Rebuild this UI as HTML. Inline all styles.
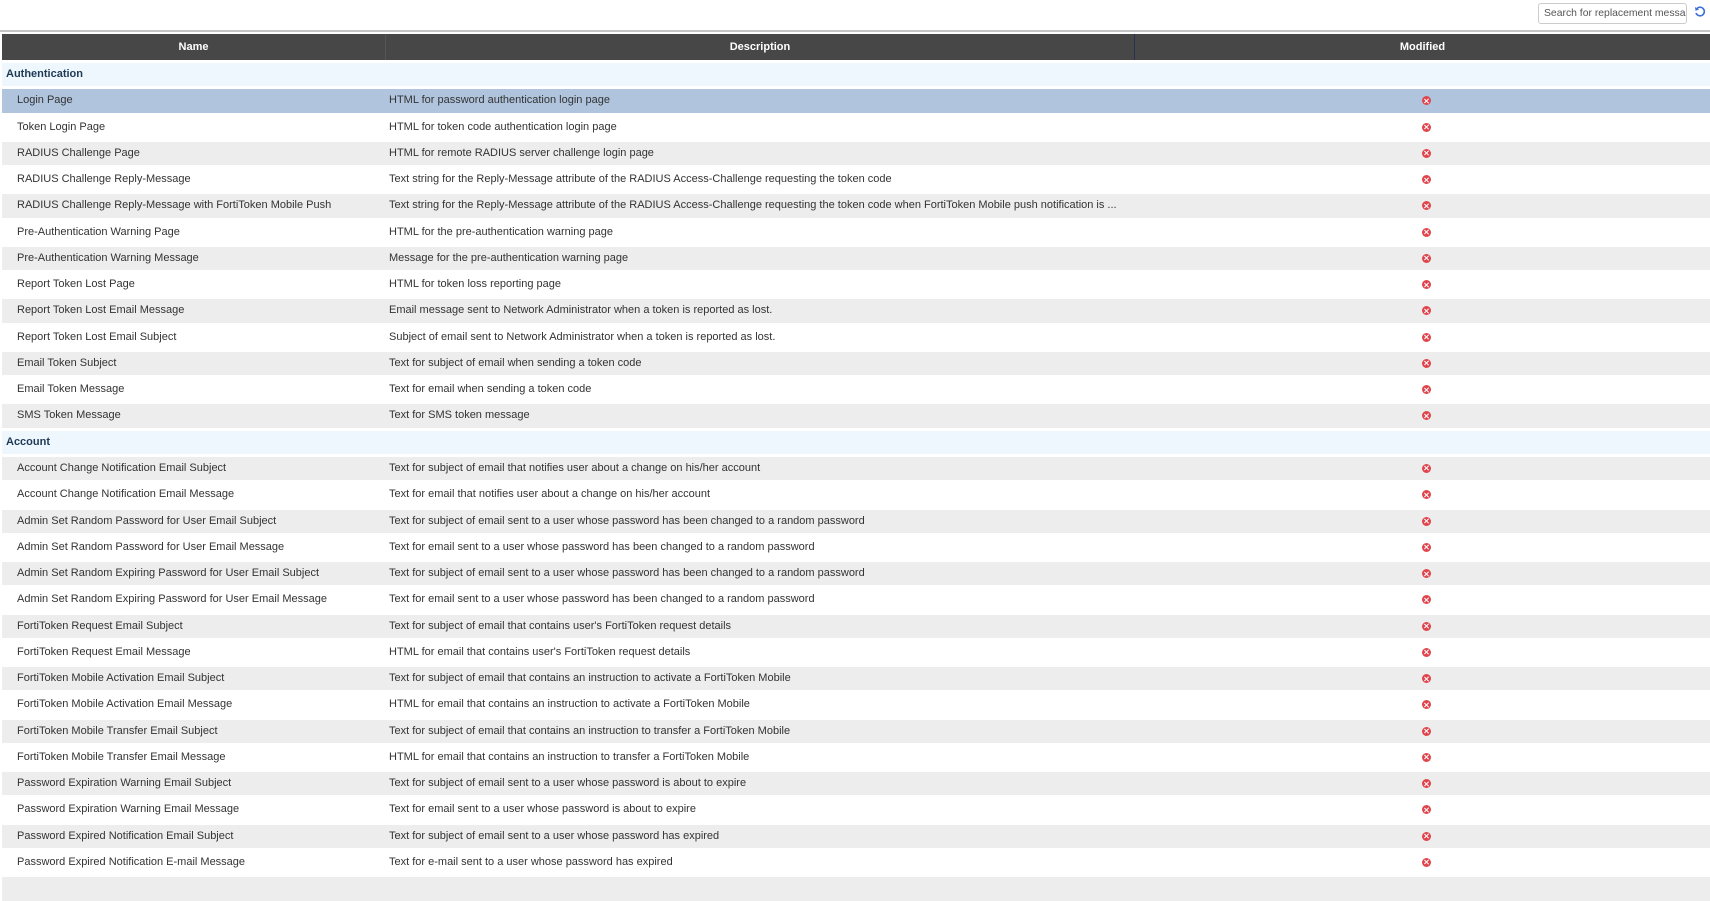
<!DOCTYPE html>
<html><head><meta charset="utf-8"><style>
*{box-sizing:border-box;margin:0;padding:0}
body{width:1710px;height:880px;overflow:hidden;background:#fff;font-family:"Liberation Sans",sans-serif;font-size:11px;color:#333;position:relative}
.top{position:absolute;left:0;top:0;width:1710px;height:32px;border-bottom:2px solid #c4c4c4}
.search{position:absolute;left:1538px;top:3px;width:149px;height:21px;border:1px solid #ccc;border-radius:3px;font-size:10.4px;color:#555;padding:4px 5px;white-space:nowrap;overflow:hidden}
.ref{position:absolute;left:1694px;top:6px}
.hdr{position:absolute;left:2px;top:34px;width:1708px;height:26px;background:#474747;color:#fff;font-weight:bold;font-size:11px}
.hdr div{position:absolute;top:0;height:26px;line-height:26px;text-align:center}
.rows{position:absolute;left:2px;top:60px;width:1708px}
.r{height:26.28px;border-top:3px solid #fff;position:relative}
.r.g{background:#ededed}
.r.s{background:#b0c4de}
.r.grp{background:#eef6fe;font-weight:bold;color:#1f3a55}
.r span{position:absolute;top:0;line-height:23px;white-space:nowrap}
.n{left:15px}.d{left:387px}
.grp span{left:4px}
.x{position:absolute;left:1420px;top:7px;width:9px;height:9px;border-radius:50%;background:#e0454d}
.x:before,.x:after{content:"";position:absolute;left:4px;top:1.5px;width:1.3px;height:6px;background:#fff;transform:rotate(45deg)}
.x:after{transform:rotate(-45deg)}
</style></head><body>
<div class="top"><div class="search">Search for replacement messag</div>
<svg class="ref" width="12" height="12" viewBox="0 0 12 12"><path d="M3 2.5 A4.3 4.3 0 1 1 2 7" fill="none" stroke="#3b6fd8" stroke-width="1.6"/><path d="M1 1 L1.5 4.8 L5 3.6 Z" fill="#3b6fd8"/></svg></div>
<div class="hdr"><div style="left:0;width:383px">Name</div><div style="left:383px;width:750px;border-left:1px solid #555;border-right:1px solid #2a3050">Description</div><div style="left:1133px;width:575px">Modified</div></div>
<div class="rows">
<div class="r grp"><span>Authentication</span></div>
<div class="r s"><span class="n">Login Page</span><span class="d">HTML for password authentication login page</span><i class="x"></i></div>
<div class="r"><span class="n">Token Login Page</span><span class="d">HTML for token code authentication login page</span><i class="x"></i></div>
<div class="r g"><span class="n">RADIUS Challenge Page</span><span class="d">HTML for remote RADIUS server challenge login page</span><i class="x"></i></div>
<div class="r"><span class="n">RADIUS Challenge Reply-Message</span><span class="d">Text string for the Reply-Message attribute of the RADIUS Access-Challenge requesting the token code</span><i class="x"></i></div>
<div class="r g"><span class="n">RADIUS Challenge Reply-Message with FortiToken Mobile Push</span><span class="d">Text string for the Reply-Message attribute of the RADIUS Access-Challenge requesting the token code when FortiToken Mobile push notification is ...</span><i class="x"></i></div>
<div class="r"><span class="n">Pre-Authentication Warning Page</span><span class="d">HTML for the pre-authentication warning page</span><i class="x"></i></div>
<div class="r g"><span class="n">Pre-Authentication Warning Message</span><span class="d">Message for the pre-authentication warning page</span><i class="x"></i></div>
<div class="r"><span class="n">Report Token Lost Page</span><span class="d">HTML for token loss reporting page</span><i class="x"></i></div>
<div class="r g"><span class="n">Report Token Lost Email Message</span><span class="d">Email message sent to Network Administrator when a token is reported as lost.</span><i class="x"></i></div>
<div class="r"><span class="n">Report Token Lost Email Subject</span><span class="d">Subject of email sent to Network Administrator when a token is reported as lost.</span><i class="x"></i></div>
<div class="r g"><span class="n">Email Token Subject</span><span class="d">Text for subject of email when sending a token code</span><i class="x"></i></div>
<div class="r"><span class="n">Email Token Message</span><span class="d">Text for email when sending a token code</span><i class="x"></i></div>
<div class="r g"><span class="n">SMS Token Message</span><span class="d">Text for SMS token message</span><i class="x"></i></div>
<div class="r grp"><span>Account</span></div>
<div class="r g"><span class="n">Account Change Notification Email Subject</span><span class="d">Text for subject of email that notifies user about a change on his/her account</span><i class="x"></i></div>
<div class="r"><span class="n">Account Change Notification Email Message</span><span class="d">Text for email that notifies user about a change on his/her account</span><i class="x"></i></div>
<div class="r g"><span class="n">Admin Set Random Password for User Email Subject</span><span class="d">Text for subject of email sent to a user whose password has been changed to a random password</span><i class="x"></i></div>
<div class="r"><span class="n">Admin Set Random Password for User Email Message</span><span class="d">Text for email sent to a user whose password has been changed to a random password</span><i class="x"></i></div>
<div class="r g"><span class="n">Admin Set Random Expiring Password for User Email Subject</span><span class="d">Text for subject of email sent to a user whose password has been changed to a random password</span><i class="x"></i></div>
<div class="r"><span class="n">Admin Set Random Expiring Password for User Email Message</span><span class="d">Text for email sent to a user whose password has been changed to a random password</span><i class="x"></i></div>
<div class="r g"><span class="n">FortiToken Request Email Subject</span><span class="d">Text for subject of email that contains user's FortiToken request details</span><i class="x"></i></div>
<div class="r"><span class="n">FortiToken Request Email Message</span><span class="d">HTML for email that contains user's FortiToken request details</span><i class="x"></i></div>
<div class="r g"><span class="n">FortiToken Mobile Activation Email Subject</span><span class="d">Text for subject of email that contains an instruction to activate a FortiToken Mobile</span><i class="x"></i></div>
<div class="r"><span class="n">FortiToken Mobile Activation Email Message</span><span class="d">HTML for email that contains an instruction to activate a FortiToken Mobile</span><i class="x"></i></div>
<div class="r g"><span class="n">FortiToken Mobile Transfer Email Subject</span><span class="d">Text for subject of email that contains an instruction to transfer a FortiToken Mobile</span><i class="x"></i></div>
<div class="r"><span class="n">FortiToken Mobile Transfer Email Message</span><span class="d">HTML for email that contains an instruction to transfer a FortiToken Mobile</span><i class="x"></i></div>
<div class="r g"><span class="n">Password Expiration Warning Email Subject</span><span class="d">Text for subject of email sent to a user whose password is about to expire</span><i class="x"></i></div>
<div class="r"><span class="n">Password Expiration Warning Email Message</span><span class="d">Text for email sent to a user whose password is about to expire</span><i class="x"></i></div>
<div class="r g"><span class="n">Password Expired Notification Email Subject</span><span class="d">Text for subject of email sent to a user whose password has expired</span><i class="x"></i></div>
<div class="r"><span class="n">Password Expired Notification E-mail Message</span><span class="d">Text for e-mail sent to a user whose password has expired</span><i class="x"></i></div>
<div class="r g"></div>
</div>
</body></html>
